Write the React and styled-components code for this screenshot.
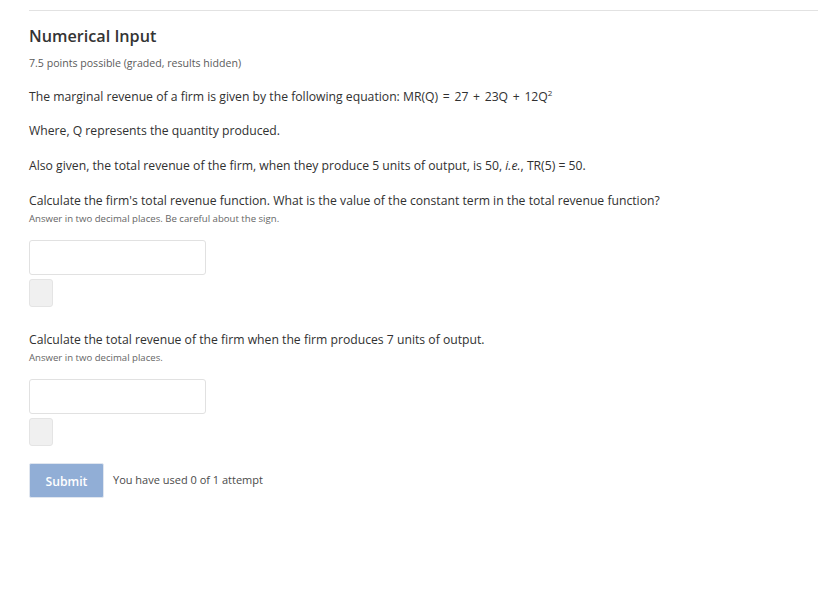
import React from 'react';
import styled, { createGlobalStyle } from 'styled-components';

const GlobalStyle = createGlobalStyle`
  html, body {
    margin: 0;
    padding: 0;
    background: #fff;
  }
  body {
    font-family: 'Open Sans', 'Noto Sans', sans-serif;
    color: #313131;
  }
`;

const Problem = styled.div`
  margin: 10px 0 0 29px;
  border-top: 1px solid #e2e2e2;
  padding-top: 14px;
  padding-bottom: 100px;
`;

const Title = styled.h3`
  margin: 0;
  font-size: 16.2px;
  line-height: 22px;
  font-weight: 600;
  color: #343434;
`;

const Points = styled.div`
  margin-top: 8px;
  font-size: 10.6px;
  line-height: 16px;
  color: #5b5b5b;
`;

const Para = styled.p`
  margin: ${p => p.$top || 14}px 0 0 0;
  font-size: 12.2px;
  line-height: 20px;
  color: #313131;
`;

const Eq = styled.span`
  word-spacing: 1.5px;
`;

const Sup = styled.sup`
  font-size: 8px;
  line-height: 0;
`;

const Hint = styled.div`
  margin-top: 1px;
  font-size: 9.6px;
  line-height: 13px;
  color: #666;
`;

const Field = styled.div`
  display: flex;
  flex-direction: column;
  align-items: flex-start;
  gap: 4px;
  margin-top: 15px;
`;

const TextInput = styled.input`
  box-sizing: border-box;
  width: 177px;
  height: 35px;
  border: 1px solid #e1e1e1;
  border-radius: 3px;
  background: #fff;
  outline: none;
`;

const Status = styled.span`
  box-sizing: border-box;
  width: 24px;
  height: 28px;
  border: 1px solid #e4e4e4;
  border-radius: 3px;
  background: #f0f0f0;
`;

const Actions = styled.div`
  display: flex;
  align-items: center;
  gap: 9px;
  margin-top: 17px;
`;

const SubmitButton = styled.button`
  box-sizing: border-box;
  width: 75px;
  height: 35px;
  border: 1px solid #e0e6ef;
  border-radius: 2px;
  background: #91aed6;
  color: #fff;
  font-family: inherit;
  font-size: 12.2px;
  font-weight: 600;
  padding: 2px 0 0 0;
`;

const Attempts = styled.span`
  font-size: 11px;
  color: #4a4a4a;
  margin-top: -3px;
`;

const App = () => (
  <>
    <GlobalStyle />
    <Problem>
      <Title>Numerical Input</Title>
      <Points>7.5 points possible (graded, results hidden)</Points>
      <Para $top={16}>
        The marginal revenue of a firm is given by the following equation: <Eq>MR(Q) = 27 + 23Q + 12Q<Sup>2</Sup></Eq>
      </Para>
      <Para>Where, Q represents the quantity produced.</Para>
      <Para $top={15}>
        Also given, the total revenue of the firm, when they produce 5 units of output, is 50, <i>i.e.</i>, TR(5) = 50.
      </Para>
      <Para $top={15}>
        Calculate the firm's total revenue function. What is the value of the constant term in the total revenue function?
      </Para>
      <Hint>Answer in two decimal places. Be careful about the sign.</Hint>
      <Field>
        <TextInput type="text" />
        <Status />
      </Field>
      <Para $top={23}>Calculate the total revenue of the firm when the firm produces 7 units of output.</Para>
      <Hint>Answer in two decimal places.</Hint>
      <Field>
        <TextInput type="text" />
        <Status />
      </Field>
      <Actions>
        <SubmitButton>Submit</SubmitButton>
        <Attempts>You have used 0 of 1 attempt</Attempts>
      </Actions>
    </Problem>
  </>
);

export default App;
